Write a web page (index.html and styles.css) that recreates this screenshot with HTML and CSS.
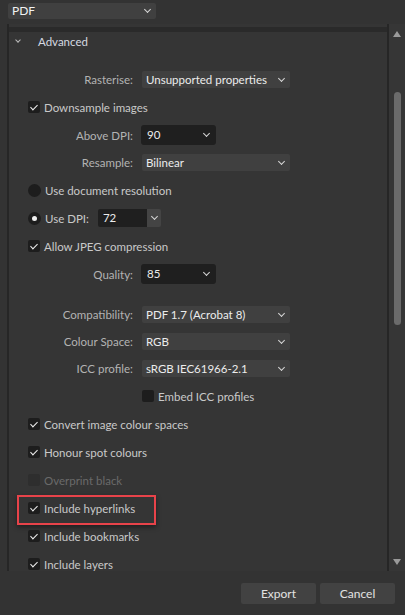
FILE: index.html
```html
<!DOCTYPE html>
<html lang="en">
<head>
	<meta charset="UTF-8">
	<title>Export PDF</title>
	<link rel="stylesheet" href="styles.css">
</head>
<body>
	<div class="top">
		<div class="combo format">PDF<span class="chev"></span></div>
	</div>

	<div class="frame">
		<div class="view">
			<div class="band"></div>
			<div class="section-head"><span class="chev head-chev"></span>Advanced</div>

			<div class="rows">
				<div class="row tight">
					<span class="label">Rasterise:</span>
					<div class="combo wide">Unsupported properties<span class="chev"></span></div>
				</div>
				<div class="row">
					<span class="check on"></span><span class="text">Downsample images</span>
				</div>
				<div class="row">
					<span class="label">Above DPI:</span>
					<div class="combo dark">90<span class="chev"></span></div>
				</div>
				<div class="row tight">
					<span class="label">Resample:</span>
					<div class="combo wide">Bilinear<span class="chev"></span></div>
				</div>
				<div class="row">
					<span class="radio"></span><span class="text">Use document resolution</span>
				</div>
				<div class="row">
					<span class="radio on"></span><span class="text">Use DPI:</span>
					<div class="spin">
						<span class="spin-val">72</span>
						<span class="spin-btn"><span class="chev"></span></span>
					</div>
				</div>
				<div class="row">
					<span class="check on"></span><span class="text">Allow JPEG compression</span>
				</div>
				<div class="row gap-after">
					<span class="label">Quality:</span>
					<div class="combo dark">85<span class="chev"></span></div>
				</div>
				<div class="row tight">
					<span class="label">Compatibility:</span>
					<div class="combo wide">PDF 1.7 (Acrobat 8)<span class="chev"></span></div>
				</div>
				<div class="row tight">
					<span class="label">Colour Space:</span>
					<div class="combo wide">RGB<span class="chev"></span></div>
				</div>
				<div class="row tight">
					<span class="label">ICC profile:</span>
					<div class="combo wide">sRGB IEC61966-2.1<span class="chev"></span></div>
				</div>
				<div class="row">
					<span class="label"></span>
					<span class="check"></span><span class="text">Embed ICC profiles</span>
				</div>
				<div class="row">
					<span class="check on"></span><span class="text">Convert image colour spaces</span>
				</div>
				<div class="row">
					<span class="check on"></span><span class="text">Honour spot colours</span>
				</div>
				<div class="row disabled">
					<span class="check"></span><span class="text">Overprint black</span>
				</div>
				<div class="row marked">
					<span class="check on"></span><span class="text">Include hyperlinks</span>
					<span class="highlight"></span>
				</div>
				<div class="row">
					<span class="check on"></span><span class="text">Include bookmarks</span>
				</div>
				<div class="row">
					<span class="check on"></span><span class="text">Include layers</span>
				</div>
			</div>
		</div>

		<div class="scrollbar">
			<span class="arrow up"></span>
			<div class="track"><span class="thumb"></span></div>
			<span class="arrow down"></span>
		</div>
	</div>

	<div class="footer">
		<button class="btn">Export</button>
		<button class="btn">Cancel</button>
	</div>
</body>
</html>
```

FILE: styles.css
```css
*{margin:0;padding:0;box-sizing:border-box;}
html,body{height:100%;}
body{
	background-color:#333333;
	font-family:Lato,"Noto Sans",sans-serif;
	font-size:11.5px;
	color:#c9c9c9;
	overflow:hidden;
}

/* dropdowns */
.combo{
	position:relative;
	height:17px;
	line-height:17px;
	padding-left:4px;
	background:#404040;
	border-radius:2px;
	color:#ececec;
	white-space:nowrap;
}
.chev{
	position:absolute;
	right:6px;
	top:50%;
	width:5px;
	height:5px;
	margin-top:-4px;
	border-right:1.3px solid #d6d6d6;
	border-bottom:1.3px solid #d6d6d6;
	transform:rotate(45deg);
}
.combo.wide{width:148px;}
.combo.dark{
	width:75px;
	height:20px;
	line-height:20px;
	padding-left:6px;
	background:#1f1f1f;
	border-radius:3px;
	margin-left:-1px;
}
.combo.dark .chev{right:7px;}

.top{height:24px;padding:3px 0 0 8px;}
.combo.format{width:148px;height:16px;line-height:16px;color:#f2f2f2;font-size:12px;}

/* scrolled panel */
.frame{
	display:flex;
	height:547px;
	margin-left:7px;
}
.view{
	flex:1;
	border-left:2px solid #262626;
	border-right:2px solid #262626;
	background:#353535;
	overflow:hidden;
}
.band{
	height:5px;
	margin-top:3px;
	background:#2a2a2a;
}
.section-head{
	position:relative;
	height:20px;
	line-height:20px;
	padding-left:29px;
	color:#d6dae2;
}
.head-chev{
	left:7px;
	right:auto;
	width:4px;
	height:4px;
	border-color:#bbbbbb;
	border-width:1.2px;
}
.rows{padding-top:14px;}
.row{
	position:relative;
	display:flex;
	align-items:center;
	height:28px;
	padding-left:19px;
}
.row.tight{height:27px;}
.row.gap-after{margin-bottom:13px;}
.label{
	width:124px;
	margin-left:-19px;
	margin-right:9px;
	text-align:right;
	color:#b3b3b3;
	flex-shrink:0;
}
.text{margin-left:4px;white-space:nowrap;}

.check{
	position:relative;
	width:12px;
	height:12px;
	border-radius:2px;
	background:#1d1d1d;
	flex-shrink:0;
}
.check.on::after{
	content:"";
	position:absolute;
	left:4px;
	top:2px;
	width:3px;
	height:6px;
	border-right:1.4px solid #f0f0f0;
	border-bottom:1.4px solid #f0f0f0;
	transform:rotate(45deg);
}
.radio{
	position:relative;
	width:13px;
	height:13px;
	border-radius:50%;
	background:#1d1d1d;
	flex-shrink:0;
}
.radio.on::after{
	content:"";
	position:absolute;
	left:4px;
	top:4px;
	width:5px;
	height:5px;
	border-radius:50%;
	background:#f0f0f0;
}
.disabled .check{background:#2e2e2e;}
.disabled .text{color:#6a6a6a;}

.spin{display:flex;margin-left:9px;height:18px;}
.spin-val{
	width:49px;
	line-height:18px;
	padding-left:5px;
	background:#1f1f1f;
	color:#ececec;
	border-radius:2px 0 0 2px;
}
.spin-btn{
	position:relative;
	width:14px;
	background:#444444;
	border-radius:0 2px 2px 0;
}
.spin-btn .chev{right:4px;}

.highlight{
	position:absolute;
	left:8px;
	top:1px;
	width:139px;
	height:30px;
	border:2px solid #e8434a;
	box-shadow:0 2px 5px rgba(0,0,0,0.45);
}

/* scrollbar */
.scrollbar{
	width:16px;
	display:flex;
	flex-direction:column;
	align-items:center;
	background:#363636;
}
.arrow{
	width:0;
	height:0;
	border-left:4px solid transparent;
	border-right:4px solid transparent;
}
.arrow.up{margin-top:7px;border-bottom:6px solid #9a9a9a;}
.arrow.down{margin-bottom:6px;border-top:6px solid #9a9a9a;}
.track{flex:1;width:100%;padding-top:55px;display:flex;justify-content:center;}
.thumb{
	width:7px;
	height:233px;
	border-radius:4px;
	background:#6b6b6b;
}

.footer{
	display:flex;
	justify-content:flex-end;
	gap:4px;
	padding:12px 10px 0 0;
}
.btn{
	width:75px;
	height:21px;
	border:none;
	border-radius:2px;
	background:#424242;
	color:#e2e2e2;
	font-family:inherit;
	font-size:12px;
}
```
